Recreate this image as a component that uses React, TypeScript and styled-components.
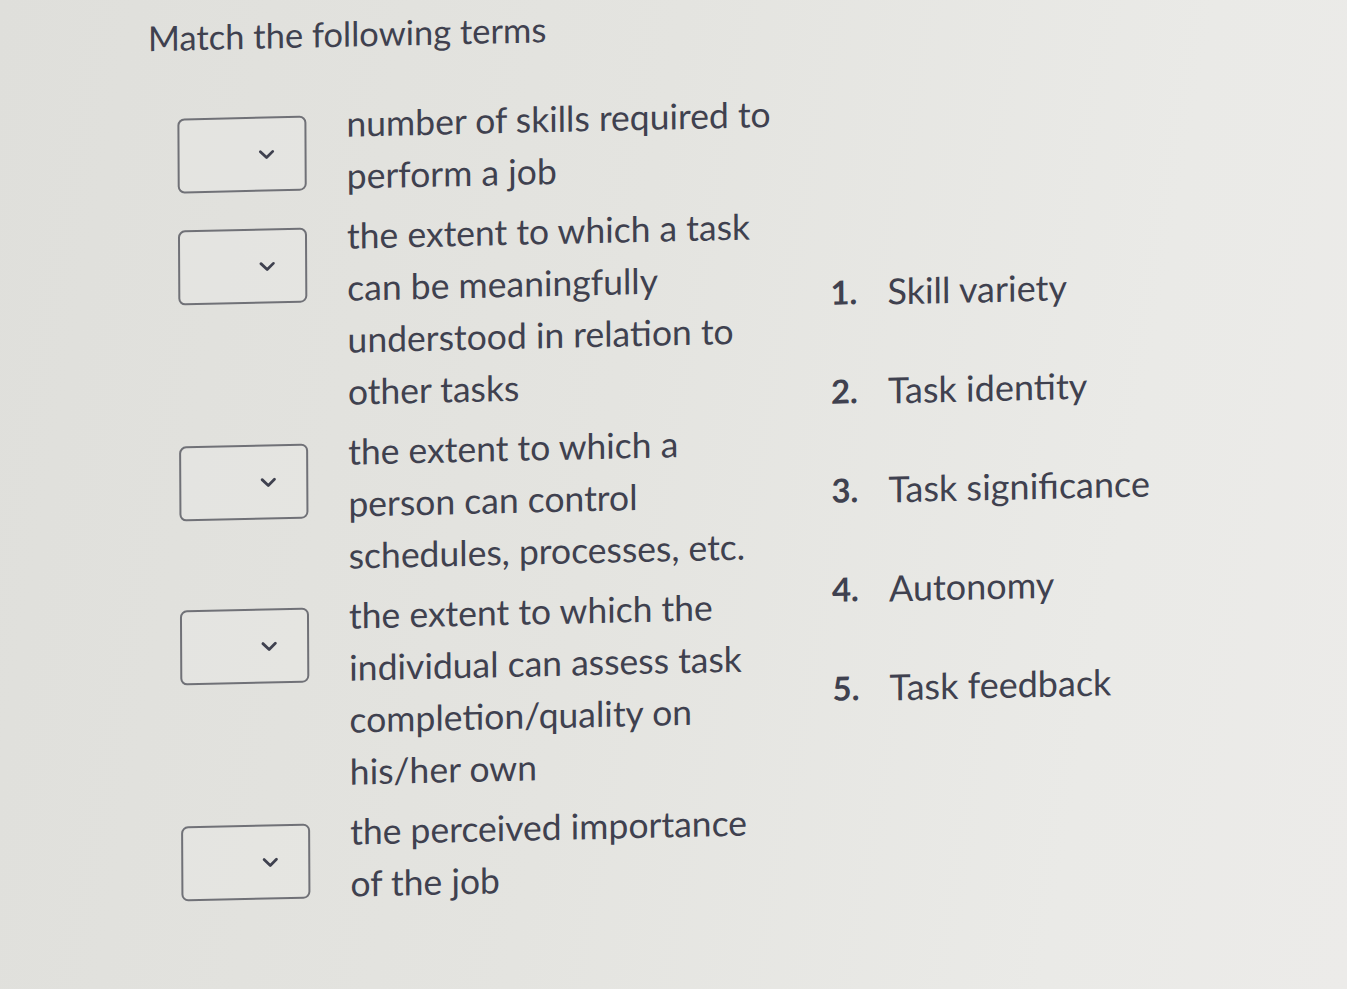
import React from "react";
import styled, { createGlobalStyle } from "styled-components";

const GlobalStyle = createGlobalStyle`
  html, body {
    margin: 0;
    padding: 0;
  }
  body {
    min-height: 100vh;
    background: linear-gradient(100deg, #dfdfdb 0%, #e4e4e0 45%, #eaeae7 80%, #ecebe9 100%);
    font-family: Lato, "Open Sans", "Liberation Sans", sans-serif;
    color: #3f414f;
    overflow: hidden;
  }
`;

const Page = styled.main`
  padding: 7px 0 0 148px;
  transform: skewY(-1.3deg) skewX(0.3deg);
  transform-origin: 554px 40px;
`;

const Title = styled.h2`
  margin: 0;
  font-size: 34.5px;
  font-weight: 400;
  line-height: 44px;
  color: #3f414f;
`;

const Matching = styled.section`
  display: flex;
  align-items: center;
  margin: 42px 0 0 29px;
`;

const TermList = styled.div`
  display: flex;
  flex-direction: column;
  gap: 8px;
`;

const TermRow = styled.div`
  display: grid;
  grid-template-columns: 129px 440px;
  column-gap: 40px;
  align-items: start;
`;

const Select = styled.div`
  box-sizing: border-box;
  height: 75px;
  margin-top: 17px;
  display: flex;
  align-items: center;
  justify-content: flex-end;
  padding-right: 30px;
  border: 2px solid #707177;
  border-radius: 7px;
  background: rgba(236, 236, 232, 0.35);
`;

const TermText = styled.div`
  font-size: 35.5px;
  line-height: 52px;
`;

const Line = styled.span`
  display: block;
  white-space: nowrap;
`;

const Options = styled.ol`
  list-style: none;
  margin: 0 0 6px 43px;
  padding: 0;
  display: flex;
  flex-direction: column;
  gap: 47px;
`;

const Option = styled.li`
  display: grid;
  grid-template-columns: 57px auto;
  font-size: 36px;
  line-height: 52px;
  white-space: nowrap;
`;

const Num = styled.span`
  font-weight: 700;
  font-size: 33px;
`;

const Chevron = () => (
  <svg width="16" height="10" viewBox="0 0 16 10" fill="none" aria-hidden="true">
    <path d="M1.8 2 L8 8 L14.2 2" stroke="#3f414f" strokeWidth="2.8" strokeLinecap="round" strokeLinejoin="round" />
  </svg>
);

const terms: string[][] = [
  ["number of skills required to", "perform a job"],
  ["the extent to which a task", "can be meaningfully", "understood in relation to", "other tasks"],
  ["the extent to which a", "person can control", "schedules, processes, etc."],
  ["the extent to which the", "individual can assess task", "completion/quality on", "his/her own"],
  ["the perceived importance", "of the job"],
];

const answers = ["Skill variety", "Task identity", "Task significance", "Autonomy", "Task feedback"];

export default function App() {
  return (
    <>
      <GlobalStyle />
      <Page>
        <Title>Match the following terms</Title>
        <Matching>
          <TermList>
            {terms.map((lines, i) => (
              <TermRow key={i}>
                <Select role="combobox" aria-label={`Match for term ${i + 1}`}>
                  <Chevron />
                </Select>
                <TermText>
                  {lines.map((l, j) => (
                    <Line key={j}>{l}</Line>
                  ))}
                </TermText>
              </TermRow>
            ))}
          </TermList>
          <Options>
            {answers.map((a, i) => (
              <Option key={a}>
                <Num>{i + 1}.</Num>
                <span>{a}</span>
              </Option>
            ))}
          </Options>
        </Matching>
      </Page>
    </>
  );
}
